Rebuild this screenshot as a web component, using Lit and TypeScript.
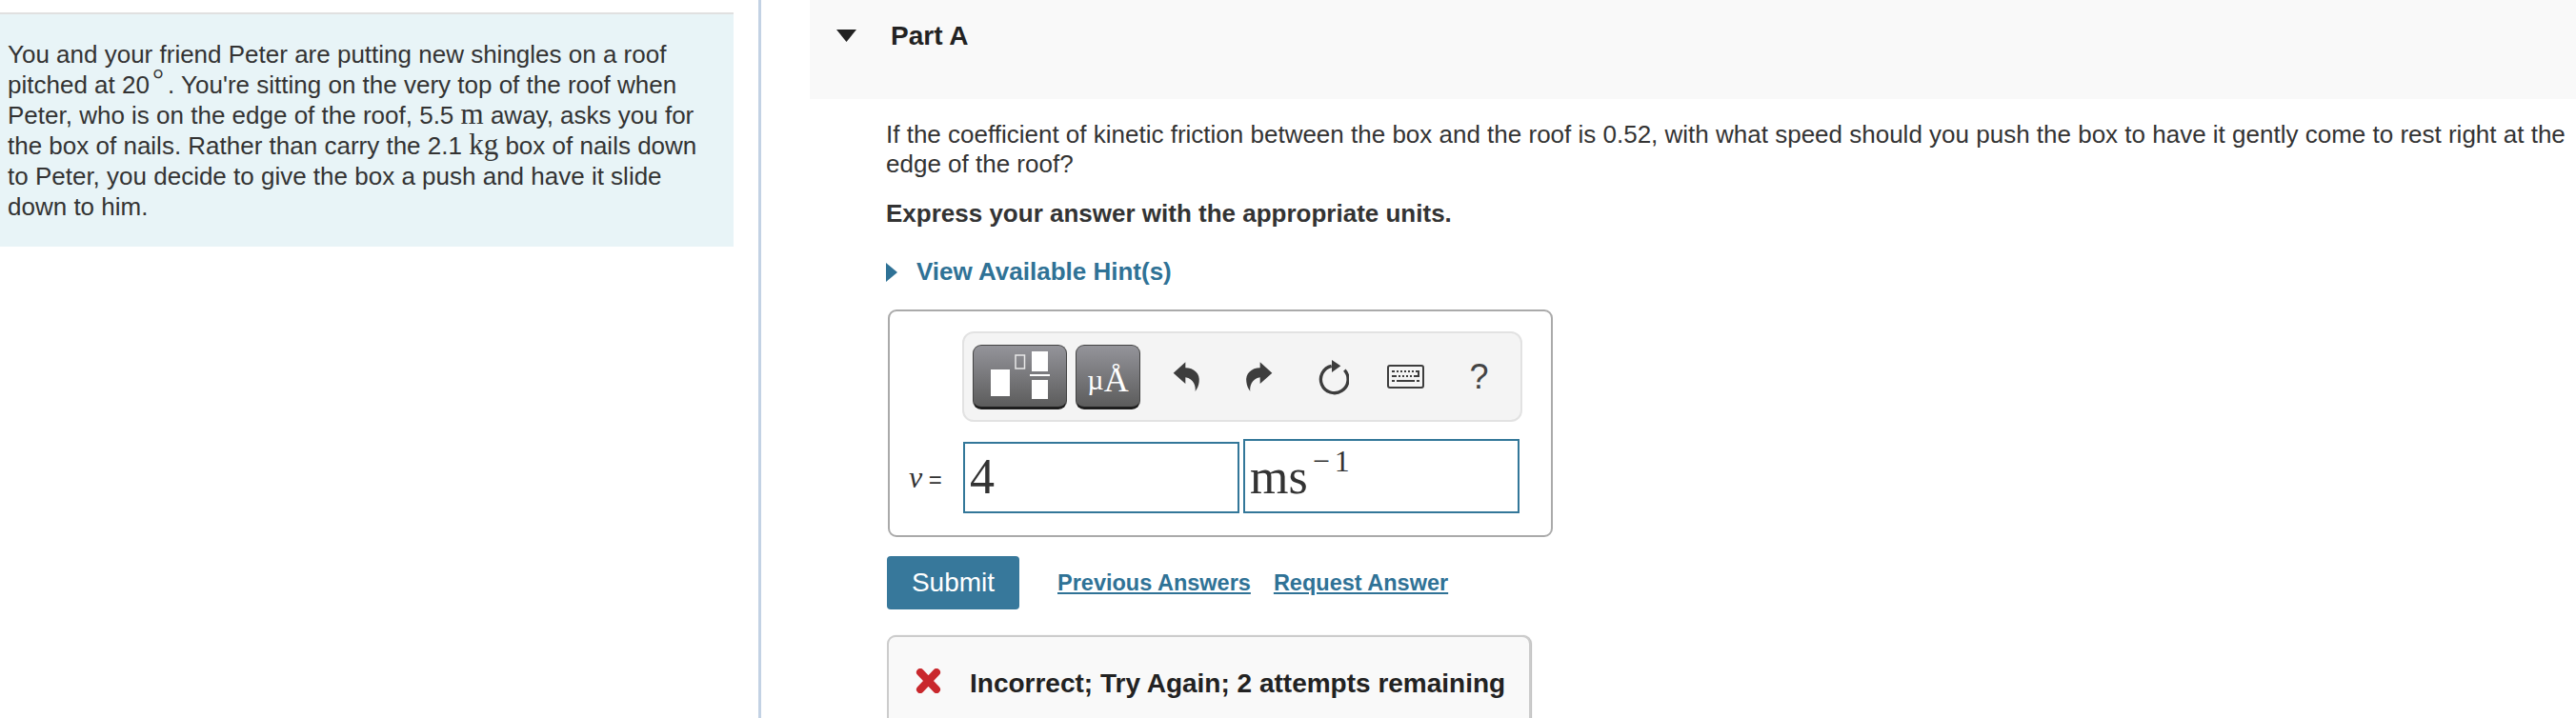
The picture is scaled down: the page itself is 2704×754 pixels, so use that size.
import { LitElement, html, css } from 'lit';
import { customElement } from 'lit/decorators.js';

@customElement('app-root')
export class AppRoot extends LitElement {
  static styles = css`
    :host {
      display: block;
      width: 2704px;
      height: 754px;
      overflow: hidden;
      background: #fff;
      font-family: "Liberation Sans", Arial, sans-serif;
      font-size: 26px;
      color: #333;
    }
    .page { display: flex; height: 754px; }

    /* left column */
    .left { width: 796px; flex: none; padding-top: 13px; box-sizing: border-box; }
    .intro {
      width: 770px;
      box-sizing: border-box;
      border-top: 2px solid #e0e0e0;
      background: #e8f4f7;
      padding: 26px 24px 26px 8px;
      line-height: 32px;
    }
    .math { font-family: "Liberation Serif", serif; font-size: 31px; line-height: 0; }
    .deg { font-family: "Liberation Serif", serif; font-size: 30px; line-height: 0; vertical-align: 5px; margin-left: 3px; letter-spacing: -3px; }

    /* right column */
    .right { flex: 1; min-width: 0; border-left: 3px solid #c3d2e4; padding-left: 51px; }
    .head {
      display: flex;
      height: 104px;
      box-sizing: border-box;
      background: #f9f9f9;
      padding: 22px 0 0 28px;
      gap: 36px;
      font-size: 28px;
      font-weight: bold;
      line-height: 32px;
      color: #222;
    }
    .head svg { margin-top: 9px; flex: none; }
    .body { padding: 22px 10px 0 80px; line-height: 31px; }
    p { margin: 0; }
    .express { margin-top: 21px; font-weight: bold; }
    .hint {
      display: flex;
      align-items: center;
      gap: 20px;
      margin-top: 30px;
      font-weight: bold;
      color: #2f7296;
    }

    /* answer box */
    .answer {
      width: 698px;
      height: 239px;
      box-sizing: border-box;
      margin: 24px 0 0 2px;
      border: 2px solid #aaa;
      border-radius: 9px;
      padding: 21px 0 0 76px;
      position: relative;
    }
    .toolbar {
      display: flex;
      align-items: center;
      width: 588px;
      height: 95px;
      box-sizing: border-box;
      margin: 0;
      padding-left: 9px;
      background: #f4f4f4;
      border: 2px solid #e2e2e2;
      border-radius: 12px;
    }
    .tpl {
      height: 68px;
      box-sizing: border-box;
      border-radius: 9px;
      border: 1px solid #444;
      border-bottom: 3px solid #1e1e1e;
      background: linear-gradient(#94949a, #5c5c5c);
      display: flex;
      align-items: center;
      justify-content: center;
      flex: none;
    }
    .tpl.one { width: 99px; }
    .tpl.two {
      width: 68px;
      margin-left: 9px;
      margin-right: 9px;
      color: #fff;
      font-family: "Liberation Serif", serif;
      font-size: 36px;
      line-height: 1;
      padding-top: 8px;
    }
    .tpl .mu { font-size: 30px; }
    .tool {
      width: 77px;
      flex: none;
      display: flex;
      align-items: center;
      justify-content: center;
      color: #444;
      font-size: 36px;
    }
    .row {
      display: flex;
      align-items: flex-end;
      margin: 18px 0 0 -56px;
    }
    .label { width: 57px; flex: none; align-self: center; padding-top: 4px; white-space: nowrap; font-size: 24px; }
    .label i { font-family: "Liberation Serif", serif; font-size: 32px; }
    .field {
      box-sizing: border-box;
      width: 290px;
      border: 2px solid #337799;
      font-family: "Liberation Serif", serif;
      font-size: 52px;
      color: #333;
      padding-left: 5px;
      flex: none;
    }
    .field.val { height: 75px; line-height: 69px; }
    .field.unit { height: 78px; margin-left: 4px; line-height: 75px; }
    .field sup { font-size: 32px; line-height: 0; vertical-align: 23px; margin-left: 5px; word-spacing: -3px; }

    /* actions */
    .actions { display: flex; align-items: center; margin: 20px 0 0 1px; }
    .submit {
      width: 139px;
      height: 56px;
      border: none;
      border-radius: 4px;
      background: #37789b;
      color: #fff;
      font: 28px "Liberation Sans", Arial, sans-serif;
      padding: 0;
    }
    .link { font-weight: bold; font-size: 23.500px; color: #2f7296; text-decoration: underline; margin-left: 24px; }
    .link.first { margin-left: 40px; }

    /* feedback */
    .feedback {
      display: flex;
      gap: 30px;
      width: 676px;
      height: 130px;
      box-sizing: border-box;
      margin: 27px 0 0 1px;
      padding: 33px 0 0 28px;
      border: 2px solid #ccc;
      border-radius: 9px;
      box-shadow: 1px 0 1px #bbb;
      background: #f9f9f9;
      font-size: 28px;
      font-weight: bold;
      color: #222;
      line-height: 32px;
      white-space: nowrap;
    }
    .feedback svg { flex: none; }
  `;

  render() {
    return html`
      <div class="page">
        <div class="left">
          <div class="intro">
            You and your friend Peter are putting new shingles on a roof pitched at 20<span class="deg">°</span> . You're sitting on the very top of the roof when Peter, who is on the edge of the roof, 5.5 <span class="math">m</span> away, asks you for the box of nails. Rather than carry the 2.1 <span class="math">kg</span> box of nails down to Peter, you decide to give the box a push and have it slide down to him.
          </div>
        </div>
        <div class="right">
          <div class="head">
            <svg width="21" height="13" viewBox="0 0 21 13"><polygon points="0,0 21,0 10.5,13" fill="#222"/></svg>
            <span>Part A</span>
          </div>
          <div class="body">
            <p>If the coefficient of kinetic friction between the box and the roof is 0.52, with what speed should you push the box to have it gently come to rest right at the edge of the roof?</p>
            <p class="express">Express your answer with the appropriate units.</p>
            <div class="hint">
              <svg width="12" height="20" viewBox="0 0 12 20"><polygon points="0,0 12,10 0,20" fill="#2f7296"/></svg>
              <span>View Available Hint(s)</span>
            </div>
            <div class="answer">
              <div class="toolbar">
                <div class="tpl one">
                  <svg width="66" height="54" viewBox="0 0 66 54">
                    <rect x="2" y="20" width="20" height="28" fill="#fff"/>
                    <rect x="28" y="5" width="9.500" height="14" fill="none" stroke="#e8e8e8" stroke-width="1.500"/>
                    <rect x="45" y="1" width="17" height="21" fill="#fff"/>
                    <rect x="43" y="25" width="21" height="2" fill="#fff"/>
                    <rect x="45" y="31" width="17" height="20" fill="#fff"/>
                  </svg>
                </div>
                <div class="tpl two"><span class="mu">µ</span><span>Å</span></div>
                <div class="tool">
                  <svg width="30" height="34" viewBox="60 85 90 100"><path d="M65 122 L103 88 L103 106 C130 106 150 125 146 150 C145 162 140 172 134 180 C136 165 130 140 103 136 L103 156 Z" fill="#3d3d3d"/></svg>
                </div>
                <div class="tool">
                  <svg width="30" height="34" viewBox="60 85 90 100"><path transform="translate(210 0) scale(-1 1)" d="M65 122 L103 88 L103 106 C130 106 150 125 146 150 C145 162 140 172 134 180 C136 165 130 140 103 136 L103 156 Z" fill="#3d3d3d"/></svg>
                </div>
                <div class="tool">
                  <svg width="34" height="38" viewBox="515 78 102 114">
                    <path d="M603 113 A43 43 0 1 1 562 100" fill="none" stroke="#3d3d3d" stroke-width="10"/>
                    <polygon points="563,81 591,100 563,120" fill="#3d3d3d"/>
                  </svg>
                </div>
                <div class="tool">
                  <svg width="39" height="25" viewBox="0 0 39 25">
                    <rect x="1" y="1" width="37" height="23" rx="2" fill="none" stroke="#3d3d3d" stroke-width="2"/>
                    <path d="M5 6h3v2H5zM10 6h2v2h-2zM14 6h2v2h-2zM18 6h2v2h-2zM22 6h2v2h-2zM26 6h2v2h-2zM30 6h4v2h-4zM5 11h5v2H5zM12 11h2v2h-2zM16 11h2v2h-2zM20 11h2v2h-2zM24 11h2v2h-2zM28 11h6v2h-6zM32 8h2v4h-2zM5 16h3v2H5zM10 16h19v2H10zM31 16h3v2h-3z" fill="#3d3d3d"/>
                  </svg>
                </div>
                <div class="tool">?</div>
              </div>
              <div class="row">
                <span class="label"><i>v</i> =</span>
                <div class="field val">4</div>
                <div class="field unit">ms<sup>− 1</sup></div>
              </div>
            </div>
            <div class="actions">
              <button class="submit">Submit</button>
              <span class="link first">Previous Answers</span>
              <span class="link">Request Answer</span>
            </div>
            <div class="feedback">
              <svg width="27" height="26" viewBox="0 0 27 26"><path d="M5 4 L22 22 M22 4 L5 22" stroke="#c9282d" stroke-width="8" stroke-linecap="round" fill="none"/></svg>
              <span>Incorrect; Try Again; 2 attempts remaining</span>
            </div>
          </div>
        </div>
      </div>
    `;
  }
}
